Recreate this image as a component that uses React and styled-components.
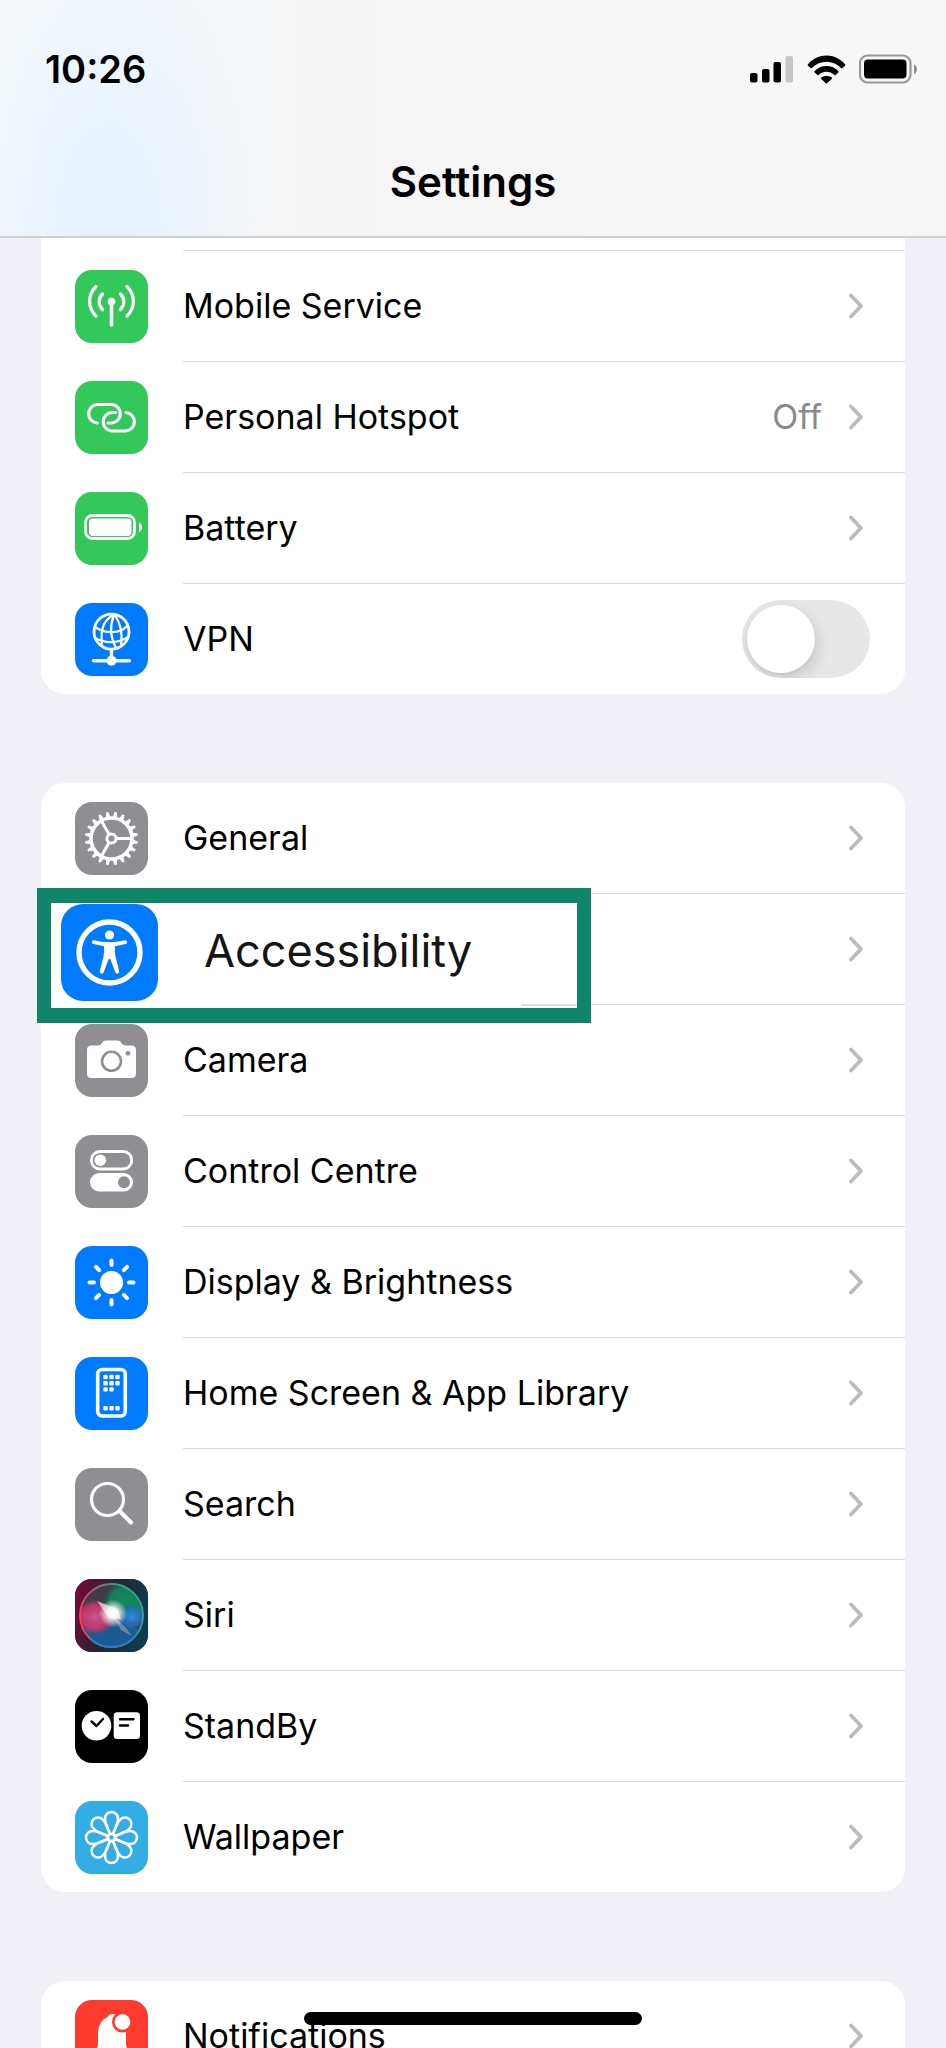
import React from "react";
import styled, { createGlobalStyle } from "styled-components";

const GlobalStyle = createGlobalStyle`
  * { box-sizing: border-box; }
  body {
    margin: 0;
    background: #f0f0f6;
    color: #000;
    font-family: Inter, "Liberation Sans", sans-serif;
  }
`;

const Screen = styled.div`
  position: relative;
  display: flex;
  flex-direction: column;
  height: 100vh;
  overflow: hidden;
`;

const Header = styled.header`
  flex: none;
  border-bottom: 2px solid #cfd1d1;
  background:
    radial-gradient(ellipse 150px 300px at 108px 100%, #e8f2fe 20%, #e9f2fb00 100%),
    linear-gradient(90deg, #f4f8fa 0, #f3f6f9 160px, #f5f5f5 320px, #f7f7f7 100%);
`;

const StatusBar = styled.div`
  display: flex;
  align-items: center;
  justify-content: space-between;
  height: 138px;
  padding: 0 28px 0 45px;
`;

const Clock = styled.time`
  font-size: 38px;
  font-weight: 600;
  line-height: 44px;
`;

const StatusIcons = styled.div`
  display: flex;
  align-items: center;
  gap: 13px;
`;

const Title = styled.h1`
  margin: 0;
  padding-bottom: 10px;
  font-size: 42px;
  font-weight: 600;
  line-height: 88px;
  text-align: center;
`;

const Content = styled.main`
  flex: 1;
  min-height: 0;
  overflow: hidden;
  padding: 0 41px;
  display: flex;
  flex-direction: column;
  gap: 89px;
`;

const Group = styled.ul`
  flex: none;
  list-style: none;
  margin: 0;
  padding: ${(p) => (p.$continued ? "12px 0 0" : "0")};
  background: #fff;
  border-radius: ${(p) => (p.$continued ? "0 0 24px 24px" : "24px")};
`;

const Row = styled.li`
  position: relative;
  display: grid;
  grid-template-columns: 73px 1fr;
  column-gap: 35px;
  padding-left: 34px;
`;

const RowIcon = styled.span`
  align-self: center;
  display: flex;
  width: 73px;
  height: 73px;
  border-radius: 17px;
  overflow: hidden;
  background: ${(p) => p.$color};
`;

const RowBody = styled.div`
  grid-column: 2;
  display: flex;
  align-items: center;
  height: ${(p) => (p.$line ? 111 : 110)}px;
  padding-right: ${(p) => (p.$control ? 35 : 41)}px;
  border-bottom: ${(p) => (p.$line ? "1px solid #d9d9db" : "0")};
  ${Row}:first-child > & { ${(p) => (p.$topLine ? "border-top: 1px solid #dfdfe0; height: 112px;" : "")} }
`;

const RowLink = styled.a`
  flex: 1;
  display: flex;
  align-items: center;
  justify-content: flex-end;
  gap: 26px;
  color: inherit;
  text-decoration: none;
`;

const Label = styled.span`
  flex: 1;
  font-size: 34px;
  line-height: 44px;
`;

const Value = styled.span`
  font-size: 34px;
  line-height: 44px;
  color: #8a8a8e;
`;

const SwitchLabel = styled.label`
  flex: 1;
  display: flex;
  align-items: center;
`;

const Switch = styled.input`
  appearance: none;
  position: relative;
  width: 128px;
  height: 78px;
  margin: 0;
  border-radius: 39px;
  overflow: hidden;
  background: #e7e7e8;
  &::before {
    content: "";
    position: absolute;
    top: 5px;
    left: 5px;
    width: 68px;
    height: 68px;
    border-radius: 50%;
    background: #fff;
    box-shadow: 2px 6px 16px #00000024, 0 2px 3px #0000000c;
  }
  &:checked { background: #34c759; }
  &:checked::before { left: 55px; }
`;

const Callout = styled.a`
  position: absolute;
  z-index: 1;
  top: -6px;
  left: -4px;
  display: flex;
  align-items: flex-start;
  gap: 46px;
  width: 554px;
  height: 135px;
  padding: 1px 0 0 10px;
  border: solid #11856a;
  border-width: 15px 14px;
  background: #fff;
  color: #151515;
  text-decoration: none;
  &::after {
    content: "";
    position: absolute;
    right: 0;
    bottom: 2px;
    width: 56px;
    height: 2px;
    background: #dededf;
  }
`;

const CalloutIcon = styled.span`
  display: flex;
  width: 97px;
  height: 97px;
  border-radius: 22px;
  background: #007aff;
`;

const CalloutLabel = styled.span`
  font-size: 45px;
  line-height: 94px;
`;

const HomeIndicator = styled.div`
  position: absolute;
  z-index: 2;
  bottom: 23px;
  left: 50%;
  width: 338px;
  height: 13px;
  margin-left: -169px;
  border-radius: 7px;
  background: #000;
`;

const Glyph = ({ children, size = 73, ...rest }) => (
  <svg
    width={size}
    height={size}
    viewBox={`0 0 ${size} ${size}`}
    fill="none"
    stroke="#fff"
    strokeWidth="3.2"
    strokeLinecap="round"
    strokeLinejoin="round"
    aria-hidden="true"
    {...rest}
  >
    {children}
  </svg>
);

const spin = (count, offset = 0) =>
  Array.from({ length: count }, (_, i) => `rotate(${offset + (i * 360) / count} 36.5 36.5)`);

const AntennaIcon = () => (
  <Glyph>
    <path d="M21 16.5C12.5 25 12.5 37.5 21 46M52 16.5C60.5 25 60.5 37.5 52 46" />
    <path d="M27.5 24C23 28.5 23 35 27.5 39.5M45.5 24C50 28.5 50 35 45.5 39.5" />
    <path d="M36.5 32V55" strokeWidth="3.6" />
    <circle cx="36.5" cy="31.5" r="3.8" fill="#fff" stroke="none" />
  </Glyph>
);

const LinkIcon = () => (
  <Glyph>
    <path d="M22.500 42H22A9.300 9.300 0 0 1 22 23.500H37A9.300 9.300 0 0 1 37 42H33" />
    <path d="M51 31.500A9.300 9.300 0 0 1 51 50H36.500A9.300 9.300 0 0 1 36.500 31.500H40.500" />
  </Glyph>
);

const BatteryIcon = () => (
  <Glyph>
    <rect x="10.500" y="23.500" width="49" height="23" rx="7" strokeWidth="2.800" />
    <rect x="14" y="26.500" width="42.500" height="17.500" rx="4" fill="#fff" stroke="none" />
    <path d="M64 30.500C68 32 68 38.500 64 40Z" fill="#fff" stroke="none" />
  </Glyph>
);

const VpnIcon = () => (
  <Glyph strokeWidth="2.2">
    <circle cx="36.5" cy="28.7" r="17.5" strokeWidth="2.8" />
    <path d="M38 12C30 17 25 24 27 41M39 12C35 22 35 34 41 45M40 12C45 20 48 30 46 41" />
    <path d="M20 24C30 31 45 31 52 23M20 35C31 41 44 40 53 34" />
    <path d="M36.5 47V54M18.5 57.7H54.5" strokeWidth="3.4" />
    <circle cx="36.5" cy="57.7" r="5" fill="#fff" stroke="none" />
  </Glyph>
);

const GearIcon = () => (
  <Glyph>
    <circle cx="36.5" cy="36.5" r="20.5" strokeWidth="3.6" />
    {spin(20, 9).map((t) => (
      <path key={t} d="M35 14.5L35.8 10.5H37.2L38 14.5Z" transform={t} fill="#fff" strokeWidth="1.2" />
    ))}
    <circle cx="36.5" cy="36.5" r="4.6" strokeWidth="3" />
    {spin(3).map((t) => (
      <path key={t} d="M42 36.5H56" transform={t} strokeWidth="3" />
    ))}
  </Glyph>
);

const CameraIcon = () => (
  <Glyph stroke="none">
    <path
      fill="#fff"
      d="M16.5 21.5H23C25 21.5 26 20.5 27 19C28.2 17.3 29 16.5 31 16.5H42.5C44.5 16.5 45.5 17.3 46.5 19C47.5 20.5 48.5 21.5 50.5 21.5H56.5C59.5 21.5 61 23 61 26V49.5C61 52.5 59.5 54 56.5 54H16.5C13.5 54 12 52.5 12 49.5V26C12 23 13.5 21.5 16.5 21.5Z"
    />
    <circle cx="36.5" cy="37.3" r="9.5" stroke="#8e8e93" strokeWidth="2.6" />
    <circle cx="53" cy="29.3" r="2.4" fill="#8e8e93" />
  </Glyph>
);

const TogglesIcon = () => (
  <Glyph>
    <rect x="16.3" y="16.5" width="40.5" height="17.5" rx="8.7" strokeWidth="2.8" />
    <circle cx="25.3" cy="25.2" r="5.8" fill="#fff" stroke="none" />
    <rect x="15" y="38" width="43" height="18.5" rx="9.2" fill="#fff" stroke="none" />
    <circle cx="49" cy="47.2" r="6" fill="#8e8e93" stroke="none" />
  </Glyph>
);

const SunIcon = () => (
  <Glyph>
    <circle cx="36.5" cy="36.5" r="11.5" fill="#fff" stroke="none" />
    {spin(8).map((t) => (
      <path key={t} d="M36.5 14.5V19" transform={t} strokeWidth="4" />
    ))}
  </Glyph>
);

const HomeScreenIcon = () => (
  <Glyph>
    <rect x="22.7" y="12.5" width="27.6" height="46.5" rx="4.5" strokeWidth="3.6" />
    {[
      [30.5, 20], [36.5, 20], [42.5, 20],
      [30.5, 26.2], [36.5, 26.2], [42.5, 26.2],
      [30.5, 32.4], [36.5, 32.4],
      [30.5, 51.2], [36.5, 51.2], [42.5, 51.2],
    ].map(([x, y]) => (
      <rect key={`${x}-${y}`} x={x - 2.2} y={y - 2.2} width="4.4" height="4.4" rx="1" fill="#fff" stroke="none" />
    ))}
  </Glyph>
);

const SearchIcon = () => (
  <Glyph>
    <circle cx="32.5" cy="31.5" r="16" />
    <path d="M44.5 43L56 54.5" strokeWidth="4.2" />
  </Glyph>
);

const SiriIcon = () => (
  <Glyph stroke="none">
    <defs>
      <linearGradient id="siriBack" x1="0" y1=".3" x2="1" y2=".6">
        <stop offset="0" stopColor="#6d0d35" />
        <stop offset=".45" stopColor="#282530" />
        <stop offset="1" stopColor="#0c3c50" />
      </linearGradient>
      <linearGradient id="siriRing" x1="0" y1=".5" x2="1" y2=".4">
        <stop offset="0" stopColor="#ff3c62" />
        <stop offset=".4" stopColor="#77768a" />
        <stop offset=".7" stopColor="#24ac7c" />
        <stop offset="1" stopColor="#2aa5a8" />
      </linearGradient>
      <radialGradient id="siriGlow">
        <stop offset="0" stopColor="#fff" />
        <stop offset=".35" stopColor="#fff" stopOpacity=".9" />
        <stop offset="1" stopColor="#fff" stopOpacity="0" />
      </radialGradient>
      <radialGradient id="siriPink">
        <stop offset="0" stopColor="#c8558f" />
        <stop offset=".7" stopColor="#c93569" stopOpacity=".9" />
        <stop offset="1" stopColor="#e02850" stopOpacity="0" />
      </radialGradient>
      <radialGradient id="siriBlue">
        <stop offset="0" stopColor="#2f8fee" />
        <stop offset=".7" stopColor="#2470c0" stopOpacity=".7" />
        <stop offset="1" stopColor="#1a60b0" stopOpacity="0" />
      </radialGradient>
      <radialGradient id="siriGreen">
        <stop offset="0" stopColor="#128a60" />
        <stop offset=".7" stopColor="#128a60" stopOpacity=".8" />
        <stop offset="1" stopColor="#0e705a" stopOpacity="0" />
      </radialGradient>
      <clipPath id="siriOrb"><circle cx="36.5" cy="36.5" r="31" /></clipPath>
    </defs>
    <rect width="73" height="73" fill="url(#siriBack)" />
    <g clipPath="url(#siriOrb)">
      <rect width="73" height="73" fill="#3f3d46" />
      <ellipse cx="52" cy="22" rx="24" ry="20" fill="url(#siriGreen)" />
      <ellipse cx="36" cy="60" rx="32" ry="18" fill="#1d5a94" />
      <ellipse cx="20" cy="38" rx="20" ry="17" fill="url(#siriPink)" />
      <ellipse cx="57" cy="38" rx="15" ry="13" fill="url(#siriBlue)" />
      <path d="M38 37L50 48L57 57L46 51Z" fill="#a6a3a6" opacity=".6" />
      <path d="M22 22L42 30L46 40L34 39Z" fill="#fff" opacity=".6" />
    </g>
    <circle cx="38" cy="34.5" r="14" fill="url(#siriGlow)" />
    <circle cx="36.5" cy="36.5" r="31.5" stroke="url(#siriRing)" strokeWidth="1.8" />
    <path d="M16 60.500A31.500 31.500 0 0 0 62 55" stroke="#2f79c8" strokeWidth="1.8" />
  </Glyph>
);

const StandByIcon = () => (
  <Glyph>
    <circle cx="21.5" cy="35.7" r="14.8" fill="#fff" stroke="none" />
    <path d="M16.5 31.5L21.5 36L28 29" stroke="#000" strokeWidth="2.4" />
    <rect x="38.7" y="22.3" width="26.3" height="26.7" rx="3.5" fill="#fff" stroke="none" />
    <path d="M45 29.3H58.5M45 35.5H53" stroke="#000" strokeWidth="2.4" />
  </Glyph>
);

const FlowerIcon = () => (
  <Glyph>
    {spin(8).map((t) => (
      <path key={t} d="M36.5 34C33 30 29.8 22.5 30 17.5A6.5 6.5 0 0 1 43 17.500C43.2 22.5 40 30 36.5 34Z" transform={t} strokeWidth="2.5" />
    ))}
    <circle cx="36.5" cy="36.5" r="3" fill="#32ade6" strokeWidth="1.6" />
  </Glyph>
);

const BellIcon = () => (
  <Glyph stroke="none">
    <path
      fill="#fff"
      d="M39 14C35 13.5 33.5 15 32.500 17C26 20 23 26 23 34V44C23 49 17 53 17 58H56C56 53 51 49 51 44V33C51 23 46 16 39 14Z"
    />
    <circle cx="47.5" cy="22" r="10.5" fill="#ff3b30" />
    <circle cx="47.5" cy="22" r="7.8" fill="#fff" />
    <path d="M30 61H43C42 69 31 69 30 61Z" fill="#fff" />
  </Glyph>
);

const AccessibilityIcon = () => (
  <Glyph size={97}>
    <circle cx="48.5" cy="48.5" r="30.5" strokeWidth="5.4" />
    <circle cx="48.5" cy="31" r="4.6" fill="#fff" stroke="none" />
    <path
      fill="#fff"
      stroke="none"
      d="M33 36.3Q41 38.2 48.5 38.2T64 36.3Q66.2 36.3 66.2 38.2Q66.2 39.7 64.5 40.1L54 42.2Q53.4 47.5 54.5 52.5L58.2 67Q58.5 69 56.8 69.6Q55 70 54.2 68L49.3 55H47.7L42.8 68Q42 70 40.2 69.6Q38.5 69 38.8 67L42.5 52.5Q43.6 47.5 43 42.2L32.5 40.1Q30.8 39.7 30.8 38.2Q30.8 36.3 33 36.3Z"
    />
  </Glyph>
);

const Chevron = () => (
  <svg width="16" height="28" viewBox="0 0 16 28" fill="none" stroke="#bcbcbf" strokeWidth="3.8" strokeLinecap="round" strokeLinejoin="round" aria-hidden="true">
    <path d="M3 3.5L13 14L3 24.5" />
  </svg>
);

const SignalIcon = () => (
  <svg width="44" height="28" viewBox="0 0 44 28" aria-hidden="true">
    <rect x="0" y="18" width="7.5" height="9.5" rx="2" />
    <rect x="12" y="14" width="7.5" height="13.5" rx="2" />
    <rect x="23.5" y="7" width="7.5" height="20.5" rx="2" />
    <rect x="35.5" y="1" width="7.5" height="26.5" rx="2" fill="#c4c6c7" />
  </svg>
);

const WifiIcon = () => (
  <svg width="39" height="29" viewBox="0 0 39 29" aria-hidden="true">
    <path d="M0.8 9.5C11 -2.4 28 -2.4 38.2 9.5Q38.5 10.3 38 10.8L35.2 13.2Q34.5 13.5 34 13C26 4.8 13 4.8 5 13Q4.5 13.5 3.8 13.2L1 10.8Q.5 10.3 .8 9.5Z" />
    <path d="M7.5 16.3C13.5 9.2 25.5 9.2 31.5 16.3Q31.8 17 31.3 17.5L28.5 20Q28 20.4 27.3 20C23 15.8 16 15.8 11.7 20Q11 20.4 10.5 20L7.7 17.5Q7.2 17 7.5 16.3Z" />
    <path d="M14 22.8C17 20.3 22 20.3 25 22.8Q25.3 23.4 24.9 23.8L20.2 28.2Q19.5 28.8 18.8 28.2L14.1 23.8Q13.7 23.4 14 22.8Z" />
  </svg>
);

const PowerIcon = () => (
  <svg width="59" height="30" viewBox="0 0 59 30" aria-hidden="true">
    <rect x="1" y="1.5" width="50.5" height="27" rx="7.5" fill="none" stroke="#97999a" strokeWidth="2.2" />
    <rect x="5" y="5.5" width="42.5" height="19" rx="4" />
    <path d="M55 10.5C59 12 59 18.5 55 20Z" fill="#8d8f90" />
  </svg>
);

const network = [
  { label: "Mobile Service", color: "#34c759", icon: <AntennaIcon /> },
  { label: "Personal Hotspot", color: "#34c759", icon: <LinkIcon />, value: "Off" },
  { label: "Battery", color: "#34c759", icon: <BatteryIcon /> },
  { label: "VPN", color: "#007aff", icon: <VpnIcon />, toggle: true },
];

const device = [
  { label: "General", color: "#8e8e93", icon: <GearIcon /> },
  { label: "Accessibility", highlighted: true },
  { label: "Camera", color: "#8e8e93", icon: <CameraIcon /> },
  { label: "Control Centre", color: "#8e8e93", icon: <TogglesIcon /> },
  { label: "Display & Brightness", color: "#007aff", icon: <SunIcon /> },
  { label: "Home Screen & App Library", color: "#007aff", icon: <HomeScreenIcon /> },
  { label: "Search", color: "#8e8e93", icon: <SearchIcon /> },
  { label: "Siri", color: "#262630", icon: <SiriIcon /> },
  { label: "StandBy", color: "#000", icon: <StandByIcon /> },
  { label: "Wallpaper", color: "#32ade6", icon: <FlowerIcon /> },
];

const alerts = [{ label: "Notifications", color: "#ff3b30", icon: <BellIcon /> }];

function SettingRow({ item, last, topLine }) {
  if (item.highlighted) {
    return (
      <Row>
        <Callout href="#accessibility">
          <CalloutIcon><AccessibilityIcon /></CalloutIcon>
          <CalloutLabel>{item.label}</CalloutLabel>
        </Callout>
        <RowBody $line={!last}>
          <RowLink as="div"><Chevron /></RowLink>
        </RowBody>
      </Row>
    );
  }
  return (
    <Row>
      <RowIcon $color={item.color}>{item.icon}</RowIcon>
      <RowBody $line={!last} $topLine={topLine} $control={item.toggle}>
        {item.toggle ? (
          <SwitchLabel>
            <Label>{item.label}</Label>
            <Switch type="checkbox" role="switch" />
          </SwitchLabel>
        ) : (
          <RowLink href="#">
            <Label>{item.label}</Label>
            {item.value && <Value>{item.value}</Value>}
            <Chevron />
          </RowLink>
        )}
      </RowBody>
    </Row>
  );
}

function SettingGroup({ items, continued }) {
  return (
    <Group $continued={continued}>
      {items.map((item, i) => (
        <SettingRow key={item.label} item={item} last={i === items.length - 1} topLine={continued} />
      ))}
    </Group>
  );
}

export default function App() {
  return (
    <Screen>
      <GlobalStyle />
      <Header>
        <StatusBar>
          <Clock>10:26</Clock>
          <StatusIcons>
            <SignalIcon />
            <WifiIcon />
            <PowerIcon />
          </StatusIcons>
        </StatusBar>
        <Title>Settings</Title>
      </Header>
      <Content>
        <SettingGroup items={network} continued />
        <SettingGroup items={device} />
        <SettingGroup items={alerts} />
      </Content>
      <HomeIndicator />
    </Screen>
  );
}
